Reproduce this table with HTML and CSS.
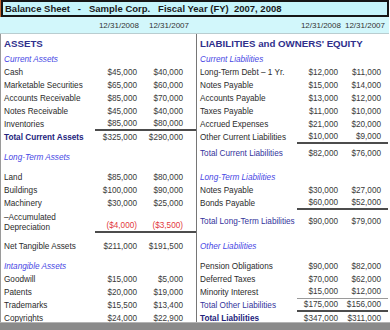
FILE: index.html
```html
<!DOCTYPE html>
<html>
<head>
<meta charset="utf-8">
<link rel="stylesheet" href="styles.css">
</head>
<body>
<div class="page">
  <div class="title">
    <div class="title-edge"></div>
    <div class="title-box">Balance Sheet   -   Sample Corp.   Fiscal Year (FY)  2007, 2008</div>
  </div>
  <div class="dates">
    <div class="date-group dg-left"><span>12/31/2008</span><span>12/31/2007</span></div>
    <div class="date-group dg-right"><span>12/31/2008</span><span>12/31/2007</span></div>
  </div>
  <div class="sheet">
    <div class="c head lab span3">ASSETS</div>
    <div class="c head lab sep span3">LIABILITIES and OWNERS' EQUITY</div>

    <div class="c lab sub">Current Assets</div><div class="c"></div><div class="c"></div>
    <div class="c lab sep sub">Current Liabilities</div><div class="c"></div><div class="c"></div>

    <div class="c lab">Cash</div><div class="c num n1">$45,000</div><div class="c num n2">$40,000</div>
    <div class="c lab sep">Long-Term Debt – 1 Yr.</div><div class="c num n3">$12,000</div><div class="c num n4">$11,000</div>

    <div class="c lab">Marketable Securities</div><div class="c num n1">$65,000</div><div class="c num n2">$60,000</div>
    <div class="c lab sep">Notes Payable</div><div class="c num n3">$15,000</div><div class="c num n4">$14,000</div>

    <div class="c lab">Accounts Receivable</div><div class="c num n1">$85,000</div><div class="c num n2">$70,000</div>
    <div class="c lab sep">Accounts Payable</div><div class="c num n3">$13,000</div><div class="c num n4">$12,000</div>

    <div class="c lab">Notes Receivable</div><div class="c num n1">$45,000</div><div class="c num n2">$40,000</div>
    <div class="c lab sep">Taxes Payable</div><div class="c num n3">$11,000</div><div class="c num n4">$10,000</div>

    <div class="c lab">Inventories</div><div class="c num n1 ul">$85,000</div><div class="c num n2 ul">$80,000</div>
    <div class="c lab sep">Accrued Expenses</div><div class="c num n3">$21,000</div><div class="c num n4">$20,000</div>

    <div class="c lab total-b">Total Current Assets</div><div class="c num n1">$325,000</div><div class="c num n2">$290,000</div>
    <div class="c lab sep">Other Current Liabilities</div><div class="c num n3 ul">$10,000</div><div class="c num n4 ul">$9,000</div>

    <div class="c lab sub low">Long-Term Assets</div><div class="c"></div><div class="c"></div>
    <div class="c lab sep total hi">Total Current Liabilities</div><div class="c num n3 hi">$82,000</div><div class="c num n4 hi">$76,000</div>

    <div class="c lab">Land</div><div class="c num n1">$85,000</div><div class="c num n2">$80,000</div>
    <div class="c lab sep sub">Long-Term Liabilities</div><div class="c"></div><div class="c"></div>

    <div class="c lab">Buildings</div><div class="c num n1">$100,000</div><div class="c num n2">$90,000</div>
    <div class="c lab sep">Notes Payable</div><div class="c num n3">$30,000</div><div class="c num n4">$27,000</div>

    <div class="c lab">Machinery</div><div class="c num n1">$30,000</div><div class="c num n2">$25,000</div>
    <div class="c lab sep">Bonds Payable</div><div class="c num n3 ul">$60,000</div><div class="c num n4 ul">$52,000</div>

    <div class="c lab two"><span>–Accumulated<br>Depreciation</span></div><div class="c num n1 ul neg bot">($4,000)</div><div class="c num n2 ul neg bot">($3,500)</div>
    <div class="c lab sep total">Total Long-Term Liabilities</div><div class="c num n3">$90,000</div><div class="c num n4">$79,000</div>

    <div class="c lab">Net Tangible Assets</div><div class="c num n1">$211,000</div><div class="c num n2">$191,500</div>
    <div class="c lab sep sub">Other Liabilities</div><div class="c"></div><div class="c"></div>

    <div class="c lab sub">Intangible Assets</div><div class="c"></div><div class="c"></div>
    <div class="c lab sep">Pension Obligations</div><div class="c num n3">$90,000</div><div class="c num n4">$82,000</div>

    <div class="c lab">Goodwill</div><div class="c num n1">$15,000</div><div class="c num n2">$5,000</div>
    <div class="c lab sep">Deferred Taxes</div><div class="c num n3">$70,000</div><div class="c num n4">$62,000</div>

    <div class="c lab">Patents</div><div class="c num n1">$20,000</div><div class="c num n2">$19,000</div>
    <div class="c lab sep">Minority Interest</div><div class="c num n3 ul-thin">$15,000</div><div class="c num n4 ul-thin">$12,000</div>

    <div class="c lab">Trademarks</div><div class="c num n1">$15,500</div><div class="c num n2">$13,400</div>
    <div class="c lab sep total">Total Other Liabilities</div><div class="c num n3 ul">$175,000</div><div class="c num n4 ul">$156,000</div>

    <div class="c lab">Copyrights</div><div class="c num n1">$24,000</div><div class="c num n2">$22,900</div>
    <div class="c lab sep total-b">Total Liabilities</div><div class="c num n3">$347,000</div><div class="c num n4">$311,000</div>
  </div>
</div>
<div class="hbar"></div>
</body>
</html>
```
FILE: styles.css
```css
* { box-sizing: border-box; }
html, body { margin: 0; padding: 0; background: #ffffff; }
body {
  font-family: "Liberation Sans", Arial, sans-serif;
  color: #2b2b2b;
  width: 390px;
  height: 330px;
  overflow: hidden;
}
.page {
  height: 322px;
  overflow: hidden;
}
.title {
  width: 389px;
}
.title-edge {
  height: 1px;
  background: linear-gradient(to right, #c4672e 0, #c4672e 196px, #2a2a2a 196px);
}
.title-box {
  height: 17px;
  background: #c6f5fb;
  border: 2px solid #161616;
  border-top-width: 2px;
  box-shadow: -1px 0 0 #c4672e;
  margin-left: 1px;
  font-weight: bold;
  font-size: 9.5px;
  line-height: 13px;
  padding-left: 2px;
  white-space: pre;
  color: #1a1a1a;
  margin-top: -1px;
}
.dates {
  display: flex;
  width: 389px;
  height: 17px;
  background: #d2f7fb;
  border-bottom: 1px solid #b9cdd0;
  font-size: 8px;
  color: #333;
}
.date-group {
  display: flex;
  justify-content: flex-end;
  align-items: center;
}
.dg-left { width: 196px; gap: 10px; padding-right: 7px; }
.dg-right { flex: 1; gap: 4px; padding-right: 4px; }

.sheet {
  display: grid;
  width: 388px;
  grid-template-columns: 94px 45px 56px 101px 44px 47px;
  grid-template-rows: 19px repeat(7, 13px) 27px repeat(3, 13px) 23px 27px repeat(5, 13px);
  border-left: 1px solid #9a9a9a;
  font-size: 8.2px;
}
.c {
  display: flex;
  align-items: center;
  line-height: 10px;
  white-space: nowrap;
  min-width: 0;
}
.span3 { grid-column: span 3; }
.lab { padding-left: 3px; color: #2b2b2b; }
.sep { border-left: 1px solid #767676; }
.num { justify-content: flex-end; color: #3a3a3a; }
.n1 { padding-right: 3px; }
.n2 { padding-right: 13px; }
.n3 { padding-right: 3px; }
.n4 { padding-right: 7px; }
.head {
  font-size: 9.7px;
  font-weight: bold;
  color: #2f2f8c;
}
.sub {
  font-style: italic;
  color: #4747e4;
}
.total { color: #34349c; }
.total-b { color: #23237c; font-weight: bold; }
.ul { border-bottom: 2px solid #4c4c4c; }
.ul-thin { border-bottom: 1px solid #9a9a9a; }
.neg { color: #e2383c; }
.low { align-items: flex-start; padding-top: 9px; }
.hi { align-items: flex-start; padding-top: 5px; }
.two { align-items: flex-end; padding-bottom: 1px; white-space: normal; line-height: 9.5px; }
.bot { align-items: flex-end; }
.hbar {
  height: 8px;
  background: #8a8a8a;
  border-top: 1px solid #b4b4b4;
}
```
